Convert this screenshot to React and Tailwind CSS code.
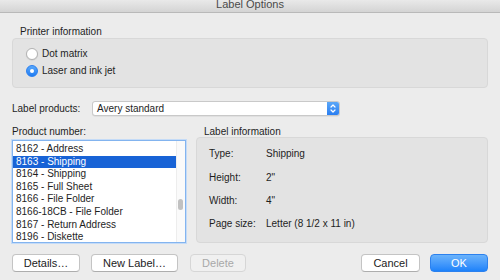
import { useState } from "react";

const products = [
  "8162 - Address",
  "8163 - Shipping",
  "8164 - Shipping",
  "8165 - Full Sheet",
  "8166 - File Folder",
  "8166-18CB - File Folder",
  "8167 - Return Address",
  "8196 - Diskette",
];

const info = [
  ["Type:", "Shipping"],
  ["Height:", "2\""],
  ["Width:", "4\""],
  ["Page size:", "Letter (8 1/2 x 11 in)"],
];

function Radio({ checked, label, onClick }) {
  return (
    <div className="flex h-[17px] items-center" onClick={onClick}>
      {checked ? (
        <span className="flex h-[12px] w-[12px] items-center justify-center rounded-full border border-[#2a7ff0] bg-gradient-to-b from-[#5aa8fa] to-[#1d7cf2]">
          <span className="h-[4px] w-[4px] rounded-full bg-white" />
        </span>
      ) : (
        <span className="h-[12px] w-[12px] rounded-full border border-[#b3b3b3] bg-white shadow-[0_0.5px_1px_rgba(0,0,0,0.12)]" />
      )}
      <span className="ml-[4px]">{label}</span>
    </div>
  );
}

function Button({ children, disabled, primary, className = "" }) {
  if (primary) {
    return (
      <button className={`h-[18px] rounded-[4px] border border-[#2c81ee] bg-gradient-to-b from-[#6ab3fb] to-[#1c82fa] text-[11px] leading-none text-white ${className}`}>
        {children}
      </button>
    );
  }
  return (
    <button
      className={`h-[18px] rounded-[4px] border text-[11px] leading-none ${
        disabled
          ? "border-[#d6d6d6] bg-[#f0f0f0] text-[#a8a8a8]"
          : "border-[#c4c4c4] border-b-[#adadad] bg-white text-[#1c1c1c]"
      } ${className}`}
    >
      {children}
    </button>
  );
}

export default function App() {
  const [printer, setPrinter] = useState("laser");
  const [selected, setSelected] = useState(1);

  return (
    <div className="h-[280px] w-[500px] overflow-hidden bg-[#ececec] font-['Liberation_Sans',Arial,sans-serif] text-[10px] leading-[12px] text-[#1e1e1e]">
      <div className="h-[13px] overflow-hidden border-b border-[#b9b9b9] bg-gradient-to-b from-[#e9e9e9] to-[#d4d4d4] text-center">
        <div className="-mt-[1px] text-[11px] leading-[11px] text-[#4a4a4a]">Label Options</div>
      </div>

      <div className="px-[12px]">
        <div className="mt-[13px] pl-[8px]">Printer information</div>
        <div className="rounded-[4px] border border-[#d8d8d8] bg-[#e3e3e3] pb-[8px] pl-[13px] pt-[6px]">
          <Radio label="Dot matrix" checked={printer === "dot"} onClick={() => setPrinter("dot")} />
          <Radio label="Laser and ink jet" checked={printer === "laser"} onClick={() => setPrinter("laser")} />
        </div>

        <div className="mt-[13px] flex h-[15px] items-center">
          <span className="w-[80px]">Label products:</span>
          <div className="flex h-[15px] w-[248px] overflow-hidden rounded-[3px] border border-[#c9c9c9] bg-white shadow-[0_0.5px_0.5px_rgba(0,0,0,0.1)]">
            <span className="flex-1 pl-[4px] leading-[13px]">Avery standard</span>
            <span className="flex w-[12px] items-center justify-center bg-gradient-to-b from-[#5ba7f8] to-[#2a7ef1]">
              <svg width="8" height="11" viewBox="0 0 8 11" fill="none" stroke="white" strokeWidth="1.2" strokeLinecap="round" strokeLinejoin="round">
                <path d="M2 4 L4 2 L6 4" />
                <path d="M2 7 L4 9 L6 7" />
              </svg>
            </span>
          </div>
        </div>

        <div className="mt-[10px] flex gap-[10px]">
          <div className="w-[174px]">
            <div>Product number:</div>
            <div className="mt-[2px] flex h-[103px] overflow-hidden border border-[#83b4ef] bg-white shadow-[0_0_0_1px_#c4dbf7]">
              <div className="flex-1 pt-[2px]">
                {products.map((p, i) => (
                  <div
                    key={p}
                    onClick={() => setSelected(i)}
                    className={`h-[12.6px] pl-[3px] leading-[12.6px] ${i === selected ? "bg-[#1863d6] text-white" : ""}`}
                  >
                    {p}
                  </div>
                ))}
              </div>
              <div className="w-[9px] border-l border-[#ededed] bg-[#fafafa] pt-[58px]">
                <div className="ml-[1px] h-[11px] w-[5px] rounded-full bg-[#c1c1c1]" />
              </div>
            </div>
          </div>

          <div className="flex-1">
            <div className="pl-[8px]">Label information</div>
            <div className="-mt-[1px] h-[106px] rounded-[4px] border border-[#d8d8d8] bg-[#e3e3e3] pl-[12px] pt-[4.5px]">
              {info.map(([k, v]) => (
                <div key={k} className="flex h-[23.4px] items-center">
                  <span className="w-[57px]">{k}</span>
                  <span>{v}</span>
                </div>
              ))}
            </div>
          </div>
        </div>

        <div className="mt-[11px] flex">
          <Button className="w-[68px]">Details…</Button>
          <Button className="ml-[11px] w-[87px]">New Label…</Button>
          <Button disabled className="ml-[12px] w-[56px]">Delete</Button>
          <Button className="ml-auto w-[59px]">Cancel</Button>
          <Button primary className="ml-[10px] w-[58px]">OK</Button>
        </div>
      </div>
    </div>
  );
}
